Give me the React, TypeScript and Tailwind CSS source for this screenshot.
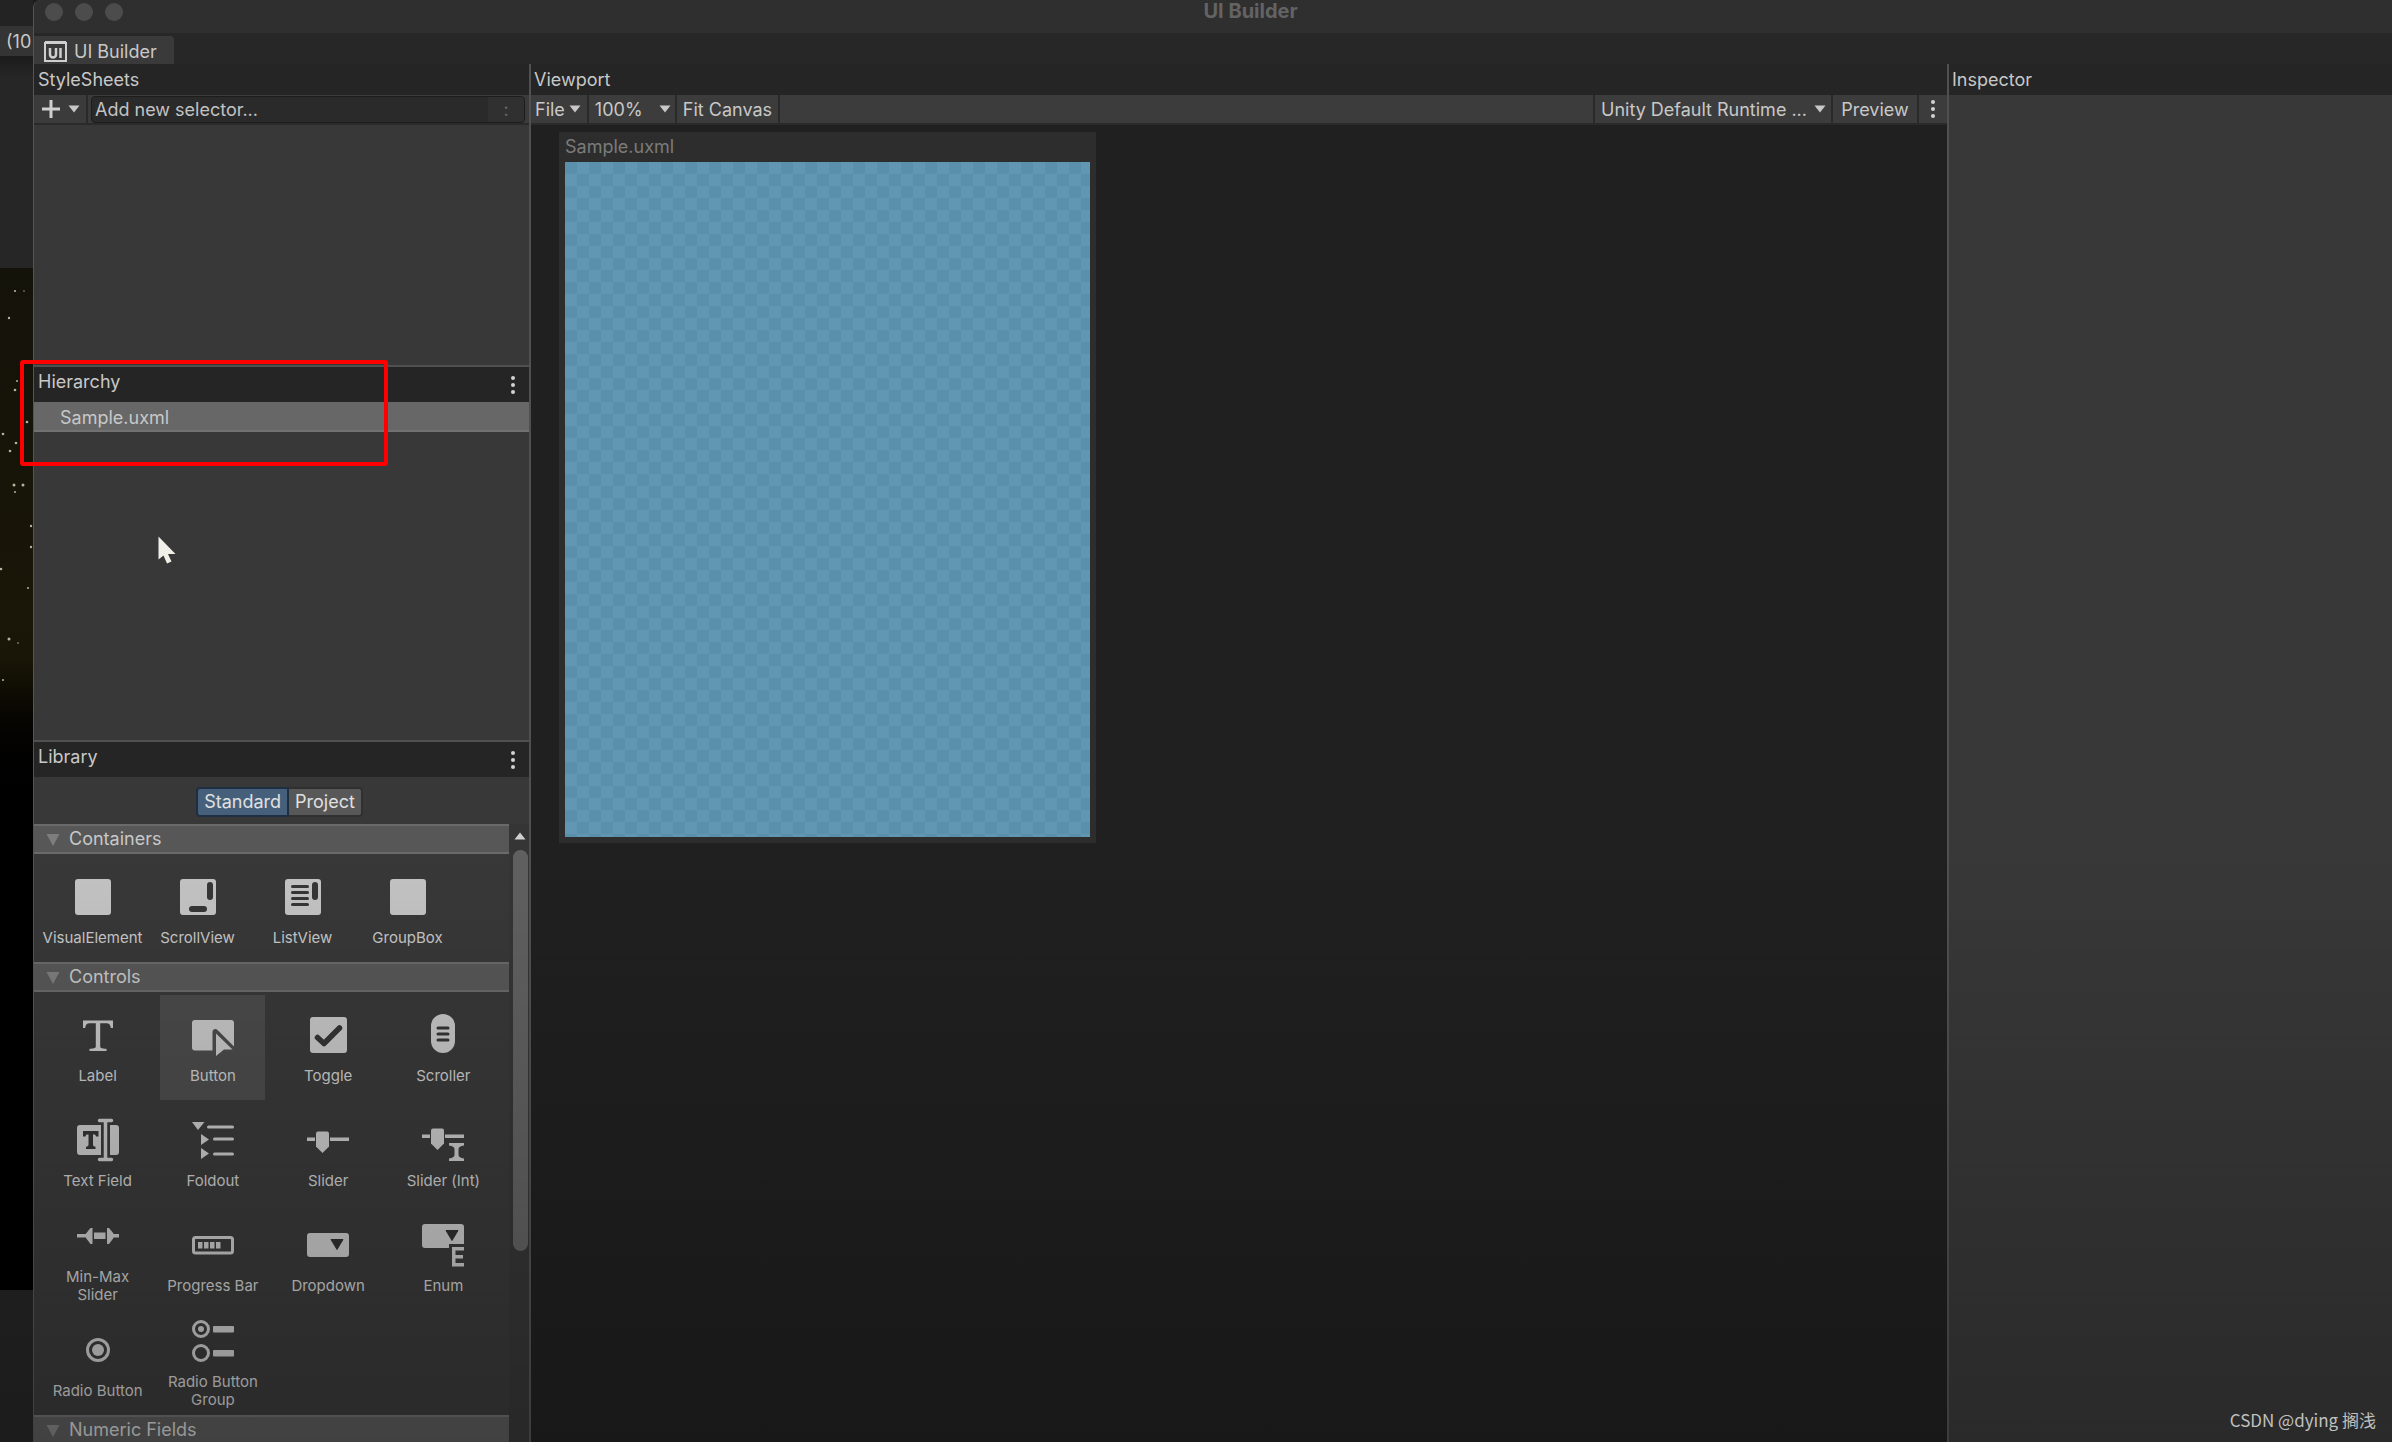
import type { ReactNode } from "react";

const CHECKER =
  "bg-[repeating-conic-gradient(#6297b4_0_25%,#5b90ad_0_50%)] bg-[length:24px_24px]";

function Icon({ children }: { children: ReactNode }) {
  return (
    <svg viewBox="0 0 48 48" className="size-12 shrink-0" fill="#c4c4c4" aria-hidden="true">
      {children}
    </svg>
  );
}

function Caret({ className = "" }: { className?: string }) {
  return (
    <svg viewBox="0 0 12 8" className={"h-2 w-3 shrink-0 " + className} fill="#c8c8c8" aria-hidden="true">
      <path d="M0.5 0.5h11L6 7.5z" />
    </svg>
  );
}

function Kebab({ label }: { label: string }) {
  return (
    <button aria-label={label} className="flex w-7 items-center justify-center">
      <svg viewBox="0 0 4 20" className="h-5 w-1" fill="#d2d2d2" aria-hidden="true">
        <circle cx="2" cy="3" r="2" />
        <circle cx="2" cy="10" r="2" />
        <circle cx="2" cy="17" r="2" />
      </svg>
    </button>
  );
}

type Item = { name: string; icon: ReactNode; active?: boolean };

const square = <rect x="6" y="6" width="36" height="36" rx="3" />;

const containers: Item[] = [
  { name: "VisualElement", icon: square },
  {
    name: "ScrollView",
    icon: (
      <>
        {square}
        <rect x="33" y="9" width="6" height="18" rx="3" fill="#363636" />
        <rect x="15" y="33" width="18" height="6" rx="3" fill="#363636" />
      </>
    ),
  },
  {
    name: "ListView",
    icon: (
      <>
        {square}
        <rect x="33" y="9" width="6" height="18" rx="3" fill="#363636" />
        <path d="M13.500 13.500h15M13.500 19.500h15M13.500 25.500h15M13.500 31.500h15" stroke="#363636" strokeWidth="3" strokeLinecap="round" />
      </>
    ),
  },
  { name: "GroupBox", icon: square },
];

const controls: Item[] = [
  {
    name: "Label",
    icon: (
      <path d="M9 9.500h30v7.500h-2.200c-.6-3.500-1.500-4.800-5-4.800h-5.600v22.800c0 2 .8 2.600 6.300 2.800V40h-17v-2.200c5.500-.2 6.300-.8 6.300-2.800V12.200h-5.600c-3.500 0-4.400 1.300-5 4.800H9z" />
    ),
  },
  {
    name: "Button",
    active: true,
    icon: (
      <>
        <path d="M6 9h36a3 3 0 0 1 3 3v23.500L28.500 19c-2-2-5-.5-5 2v18.500H6a3 3 0 0 1-3-3V12a3 3 0 0 1 3-3z" />
        <path d="M27 22.500 43.500 38.500H35L27 45z" />
      </>
    ),
  },
  {
    name: "Toggle",
    icon: (
      <>
        <rect x="6" y="6" width="37" height="36" rx="3" />
        <path d="M13.500 26.500l6.500 6L35.500 17" fill="none" stroke="#343434" strokeWidth="5.500" strokeLinecap="round" strokeLinejoin="round" />
      </>
    ),
  },
  {
    name: "Scroller",
    icon: (
      <>
        <rect x="12" y="3" width="24" height="39" rx="12" />
        <path d="M19 17h10M19 23h10M19 29h10" stroke="#343434" strokeWidth="3" strokeLinecap="round" />
      </>
    ),
  },
  {
    name: "Text Field",
    icon: (
      <>
        <path d="M6 9h21v30H6a3 3 0 0 1-3-3V12a3 3 0 0 1 3-3zM36 9h6a3 3 0 0 1 3 3v24a3 3 0 0 1-3 3h-6z" />
        <path d="M9 15h15.500v5.500H22c-.3-1.500-1-2-2-2h-1v10c0 1.500.5 2 2.500 2.200V33h-9.500v-2.300c2-.2 2.500-.7 2.500-2.200v-10h-1c-1 0-1.700.5-2 2H9z" fill="#333333" />
        <path d="M25.500 4.500h12M25.500 43.500h12M31.500 5v38" stroke="#c4c4c4" strokeWidth="3.500" strokeLinecap="round" />
      </>
    ),
  },
  {
    name: "Foldout",
    icon: (
      <>
        <path d="M3 6h12.500L9 14zM12 18l8 5.500-8 5.500zM12 32l8 5.500-8 5.500z" />
        <path d="M19.500 11h24M25.500 23h18M25.500 38h18" stroke="#c4c4c4" strokeWidth="3" strokeLinecap="round" />
      </>
    ),
  },
  {
    name: "Slider",
    icon: (
      <>
        <path d="M3 21.500h8v3.500H3zM26 21.500h19v3.500H26z" />
        <path d="M14 15.500h9a2 2 0 0 1 2 2v13l-6.500 6.500-6.500-6.500v-13a2 2 0 0 1 2-2z" />
      </>
    ),
  },
  {
    name: "Slider (Int)",
    icon: (
      <>
        <path d="M3 18.500h8V22H3zM26 18.500h19V22H26z" />
        <path d="M14 12.500h9a2 2 0 0 1 2 2v13L18.500 34 12 27.500v-13a2 2 0 0 1 2-2z" />
        <path d="M30 27h15v2.500c-3.500.5-5.500 1.500-5.500 3.500v6c0 2 2 3 5.500 3.500V45H30v-2.500c3.500-.5 5.500-1.500 5.500-3.500v-6c0-2-2-3-5.500-3.500z" />
      </>
    ),
  },
  {
    name: "Min-Max Slider",
    icon: (
      <>
        <path d="M3 22h9.500v3.500H3zM35.500 22H45v3.500h-9.500zM20 20.500h11.500V27H20z" />
        <path d="M18.500 16v16h-2L12 26v-4.500l4.500-5.500zM33 16h2l4.500 5.500V26L35 32h-2z" />
      </>
    ),
  },
  {
    name: "Progress Bar",
    icon: (
      <>
        <rect x="4.500" y="16.500" width="39" height="15.500" rx="2" fill="none" stroke="#c4c4c4" strokeWidth="3" />
        <path d="M9 21h4.500v6.500H9zM15 21h4.500v6.500H15zM21 21h4.500v6.500H21zM27 21h4.500v6.500H27z" />
      </>
    ),
  },
  {
    name: "Dropdown",
    icon: (
      <>
        <rect x="3" y="12" width="42" height="24" rx="3" />
        <path d="M27 18.500h12l-6 10z" fill="#2f2f2f" stroke="#2f2f2f" strokeLinejoin="round" />
      </>
    ),
  },
  {
    name: "Enum",
    icon: (
      <>
        <path d="M6 3h36a3 3 0 0 1 3 3v17H30v4H6a3 3 0 0 1-3-3V6a3 3 0 0 1 3-3z" />
        <path d="M27 9.500h12l-6 10z" fill="#2f2f2f" stroke="#2f2f2f" strokeLinejoin="round" />
        <path d="M33 26h12v3.500h-8.500V34H44v3.500h-7.500V42H45v3.500H33z" />
      </>
    ),
  },
  {
    name: "Radio Button",
    icon: (
      <>
        <circle cx="24" cy="24" r="10.500" fill="none" stroke="#c4c4c4" strokeWidth="3" />
        <circle cx="24" cy="24" r="6" />
      </>
    ),
  },
  {
    name: "Radio Button Group",
    icon: (
      <>
        <circle cx="12" cy="12" r="7.500" fill="none" stroke="#c4c4c4" strokeWidth="3" />
        <circle cx="12" cy="12" r="3" />
        <circle cx="12" cy="36" r="7.500" fill="none" stroke="#c4c4c4" strokeWidth="3" />
        <rect x="24" y="9" width="21" height="6.500" rx="1" />
        <rect x="24" y="33" width="21" height="6.500" rx="1" />
      </>
    ),
  },
];

const stars: [number, number, number][] = [
  [15, 23, 1.1], [24, 23, 0.7], [9, 50, 1.2], [17, 113, 1], [15, 122, 1.3], [27, 154, 1.3],
  [3, 166, 1.3], [16, 175, 1.3], [10, 183, 1.3], [14, 217, 1.5], [23, 217, 1.5], [15, 224, 1],
  [31, 258, 1.2], [31, 279, 1.2], [1, 301, 1.3], [28, 320, 1], [9, 371, 1.5], [18, 375, 0.8], [3, 412, 1],
];

function FoldHeader({ title }: { title: string }) {
  return (
    <button className="flex h-[30px] w-full shrink-0 items-center border-y-2 border-y-[#6a6a6a] bg-[#575757] pb-[2px] pl-3">
      <svg viewBox="0 0 14 14" className="mt-1 mr-[9px] size-[14px]" fill="#7d7d7d" aria-hidden="true">
        <path d="M0.500 1h13L7 13z" />
      </svg>
      <span>{title}</span>
    </button>
  );
}

function ItemButton({ item }: { item: Item }) {
  return (
    <button
      className={
        "flex size-[105px] flex-col items-center justify-center gap-2 text-[15px] leading-[18px] " +
        (item.active ? "bg-[#4a4a4a]" : "")
      }
    >
      <Icon>{item.icon}</Icon>
      {item.name}
    </button>
  );
}

function Background() {
  return (
    <div className="flex w-[33px] shrink-0 flex-col overflow-hidden bg-[#232323]">
      <div className="mt-[26px] flex h-[30px] shrink-0 items-center bg-[#343434] pl-[6px]">(10</div>
      <div className="h-[212px] shrink-0 bg-gradient-to-b from-[#1b1b1b] via-[#262626] via-10% to-[#262626]" />
      <div className="h-[1022px] shrink-0 bg-gradient-to-b from-[#14130a] via-[#1a1607] via-38% to-black to-53%">
        <svg viewBox="0 0 33 460" className="h-[460px] w-[33px]" fill="#b5b29a" aria-hidden="true">
          {stars.map(([x, y, r]) => (
            <circle key={x + "-" + y} cx={x} cy={y} r={r} />
          ))}
        </svg>
      </div>
      <div className="flex-1 bg-[#252525]" />
    </div>
  );
}

function StyleSheets() {
  return (
    <section className="flex h-[301px] shrink-0 flex-col">
      <h2 className="flex h-[31px] items-center bg-[#252525] pl-1">StyleSheets</h2>
      <div className="flex h-[30px] items-center border-b-2 border-b-[#2a2a2a] bg-[#3b3b3b]">
        <button aria-label="Add" className="flex h-full w-[54px] items-center justify-center gap-2 border-r-2 border-r-[#2a2a2a] pl-[2px]">
          <svg viewBox="0 0 18 18" className="size-[18px]" stroke="#cfcfcf" strokeWidth="3" aria-hidden="true">
            <path d="M9 0v18M0 9h18" />
          </svg>
          <Caret />
        </button>
        <div className="mr-1 ml-[3px] flex h-[27px] flex-1 items-center overflow-hidden rounded border border-[#1c1c1c] bg-[#2a2a2a]">
          <input
            aria-label="Add new selector"
            placeholder="Add new selector..."
            className="h-full min-w-0 flex-1 pl-[3px] placeholder:text-[#c2c2c2]"
          />
          <span className="flex h-full w-9 items-center justify-center bg-[#303030] text-[#6a6a6a]">:</span>
        </div>
      </div>
      <div className="flex-1" />
    </section>
  );
}

function Hierarchy() {
  return (
    <section className="flex h-[375px] shrink-0 flex-col border-t-2 border-t-[#505050]">
      <div className="flex h-[35px] justify-between bg-[#252525] pr-[2px] pl-1">
        <h2 className="leading-[30px]">Hierarchy</h2>
        <Kebab label="Hierarchy options" />
      </div>
      <button className="h-[30px] border-b-2 border-b-[#727272] bg-[#676767] pt-[2px] pl-[26px] text-left">Sample.uxml</button>
    </section>
  );
}

function Library() {
  return (
    <section className="flex min-h-0 flex-1 flex-col border-t-2 border-t-[#505050]">
      <div className="flex h-[35px] shrink-0 justify-between bg-[#252525] pr-[2px] pl-1">
        <h2 className="leading-[30px]">Library</h2>
        <Kebab label="Library options" />
      </div>
      <div className="flex h-[47px] shrink-0 items-center justify-center pt-[2px] pr-[4px] text-[#e0e0e0]">
        <button className="h-[30px] rounded-l border-2 border-[#1f2f42] bg-[#46607c] px-[6px] leading-[26px]">Standard</button>
        <button className="h-[30px] rounded-r border-y-2 border-r-2 border-[#303030] bg-[#585858] px-[6px] leading-[26px]">Project</button>
      </div>
      <div className="flex min-h-0 flex-1">
        <div className="min-w-0 flex-1 overflow-hidden">
          <FoldHeader title="Containers" />
          <div className="flex px-[6px] pt-[3px]">
            {containers.map((item) => (
              <ItemButton key={item.name} item={item} />
            ))}
          </div>
          <FoldHeader title="Controls" />
          <div className="grid grid-cols-4 justify-items-center pt-[3px] pr-[8px] pl-[6px]">
            {controls.map((item) => (
              <ItemButton key={item.name} item={item} />
            ))}
          </div>
          <FoldHeader title="Numeric Fields" />
        </div>
        <div className="flex w-5 shrink-0 flex-col items-center bg-[#353535] pl-[2px]">
          <svg viewBox="0 0 12 8" className="my-2 h-2 w-3 shrink-0" fill="#d0d0d0" aria-hidden="true">
            <path d="M0.500 7.500h11L6 0.500z" />
          </svg>
          <div className="mt-[2px] h-[401px] w-[15px] rounded-full bg-[#606060]" />
        </div>
      </div>
    </section>
  );
}

function Viewport() {
  return (
    <main className="flex min-w-0 flex-1 flex-col bg-[#202020]">
      <h2 className="flex h-[31px] shrink-0 items-center bg-[#252525] pl-[3px]">Viewport</h2>
      <div className="flex h-[30px] shrink-0 items-stretch border-b-2 border-b-[#2a2a2a] bg-[#3c3c3c]">
        <button className="flex items-center gap-1 border-r-2 border-r-[#2a2a2a] pr-[6px] pl-1">
          File
          <Caret />
        </button>
        <label className="relative flex w-[88px] items-center border-r-2 border-r-[#2a2a2a]">
          <select aria-label="Zoom" className="w-full appearance-none pl-[6px]">
            <option>100%</option>
          </select>
          <Caret className="pointer-events-none absolute right-1" />
        </label>
        <button className="border-r-2 border-r-[#2a2a2a] px-[6px]">Fit Canvas</button>
        <div className="flex-1" />
        <label className="relative flex w-[238px] items-center border-l-2 border-l-[#2a2a2a]">
          <select aria-label="Theme" className="w-full appearance-none pl-[6px]">
            <option>Unity Default Runtime ...</option>
          </select>
          <Caret className="pointer-events-none absolute right-[5px]" />
        </label>
        <button className="w-[88px] border-x-2 border-x-[#2a2a2a]">Preview</button>
        <Kebab label="Viewport options" />
      </div>
      <div className="flex pt-[7px] pl-[28px]">
        <div className="bg-[#2d2d2d] px-[6px] pb-[6px]">
          <div className="h-[30px] leading-[30px] text-[#7b7b7b]">Sample.uxml</div>
          <div className={"h-[675px] w-[525px] " + CHECKER} />
        </div>
      </div>
    </main>
  );
}

export default function App() {
  return (
    <div className="relative flex h-screen overflow-hidden bg-[#1c1c1c] font-['Inter',sans-serif] text-[18px] text-[#c8c8c8]">
      <Background />
      <div className="flex min-w-0 flex-1 flex-col overflow-hidden rounded-tl-lg border-l border-l-[#555555] bg-[#383838]">
        <header className="flex h-[33px] shrink-0 items-start bg-[#2f2f2f]">
          <div className="flex gap-3 pt-[3px] pl-[11px]">
            <span className="size-[18px] rounded-full bg-[#4c4c4c]" />
            <span className="size-[18px] rounded-full bg-[#4c4c4c]" />
            <span className="size-[18px] rounded-full bg-[#4c4c4c]" />
          </div>
          <h1 className="flex-1 pr-[14px] text-center text-[20px] leading-[22px] font-bold text-[#636363]">UI Builder</h1>
        </header>
        <nav className="flex h-[31px] shrink-0 items-end bg-[#272727]">
          <button className="flex h-7 w-[140px] items-center gap-[7px] rounded-tr bg-[#3a3a3a] pt-[3px] pl-[10px]">
            <svg viewBox="0 0 23 21" className="h-[21px] w-[23px]" fill="none" stroke="#cfcfcf" aria-hidden="true">
              <path d="M1 1.500h21" strokeWidth="3" />
              <path d="M1 1v19h21V1" strokeWidth="2" />
              <path d="M6 7v6.500a3 3 0 0 0 6 0V7M16.500 7v10" strokeWidth="2.500" />
            </svg>
            UI Builder
          </button>
        </nav>
        <div className="flex min-h-0 flex-1">
          <aside className="flex w-[497px] shrink-0 flex-col border-r-2 border-r-[#505050]">
            <StyleSheets />
            <Hierarchy />
            <Library />
          </aside>
          <Viewport />
          <aside className="w-[445px] shrink-0 border-l-2 border-l-[#505050]">
            <h2 className="flex h-[31px] items-center bg-[#252525] pl-[3px]">Inspector</h2>
          </aside>
        </div>
      </div>
      <div className="pointer-events-none absolute inset-x-0 bottom-0 h-[600px] bg-gradient-to-b from-transparent to-black/25" />
      <div className="pointer-events-none absolute top-[360px] left-5 h-[106px] w-[368px] rounded-[3px] border-4 border-[#ff0000]" />
      <svg viewBox="0 0 18 28" className="pointer-events-none absolute top-[536px] left-[158px] h-7 w-[18px]" fill="#f0f0e8" aria-hidden="true">
        <path d="M0.500 0.500v23l5-4 3.500 8 4.500-2-3.500-7.500h7.500z" />
      </svg>
      <p className="pointer-events-none absolute right-4 bottom-[10px] font-['Noto_Sans_CJK_SC',sans-serif] text-[17px] leading-6 text-[#c0c0c0]">
        CSDN @dying 搁浅
      </p>
    </div>
  );
}
